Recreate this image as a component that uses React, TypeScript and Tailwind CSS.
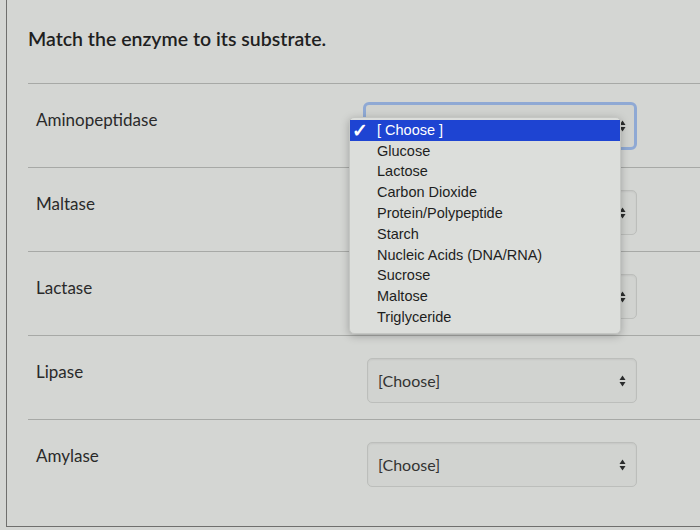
import React from "react";

const options = [
  "Glucose",
  "Lactose",
  "Carbon Dioxide",
  "Protein/Polypeptide",
  "Starch",
  "Nucleic Acids (DNA/RNA)",
  "Sucrose",
  "Maltose",
  "Triglyceride",
];

const rows = ["Aminopeptidase", "Maltase", "Lactase", "Lipase", "Amylase"];

function Arrows() {
  return (
    <svg width="7" height="12" viewBox="0 0 7 12" className="shrink-0">
      <path d="M3.5 0.5 L6.5 5 L0.5 5 Z" fill="#2a2c2c" />
      <path d="M3.5 11.5 L6.5 7 L0.5 7 Z" fill="#2a2c2c" />
    </svg>
  );
}

function SelectBox({ focused, hidden }: { focused?: boolean; hidden?: boolean }) {
  return (
    <div
      className={
        focused
          ? "w-[274px] h-[48px] rounded-[6px] border-[3px] border-[#8fa9d4] bg-[#d0d2cf] flex items-center justify-between pl-[9px] pr-[8px]"
          : "w-[270px] h-[45px] rounded-[5px] border border-[#bcbebb] bg-[#d1d3d0] shadow-[inset_0_1px_2px_rgba(0,0,0,0.06)] flex items-center justify-between pl-[10px] pr-[10px]"
      }
    >
      <span className="text-[16px] text-[#333] font-['Lato','Liberation_Sans',sans-serif]">
        {hidden ? "" : "[Choose]"}
      </span>
      <Arrows />
    </div>
  );
}

export default function App() {
  return (
    <div className="w-[700px] h-[530px] bg-[#d4d6d3] pl-[6px] pb-[3px] overflow-hidden relative font-['Lato','Liberation_Sans',sans-serif]">
      <div className="h-full border-l border-b border-[#6f6f6d] pl-[21px]">
        <div className="h-[83px] flex items-center">
          <h1 className="text-[19.5px] text-[#1f1f1f] font-semibold pb-[4px] -mt-[2px]">
            Match the enzyme to its substrate.
          </h1>
        </div>
        {rows.map((r, i) => (
          <div
            key={r}
            className="h-[84px] border-t border-[#a7a9a6] flex items-start"
          >
            <div className="w-[339px] pl-[8px] pt-[26px] text-[17px] text-[#2a2a2a] leading-[20px]">
              {r}
            </div>
            <div className={i === 0 ? "pt-[18px] -ml-[4px]" : "pt-[22px]"}>
              <SelectBox focused={i === 0} hidden={i < 3} />
            </div>
          </div>
        ))}
      </div>

      <div className="absolute left-[349px] top-[117px] w-[272px] rounded-[5px] bg-[#dcdedb] shadow-[0_2px_8px_rgba(0,0,0,0.25)] border border-[#c4c6c3] pt-[2px] pb-[5px] font-['Liberation_Sans',Arial,sans-serif] text-[14.5px] text-[#1e1e1e]">
        <div className="h-[21px] bg-[#1e44d2] text-white flex items-center">
          <span className="w-[27px] pl-[2px] text-[19px] leading-none font-bold">✓</span>
          <span>[ Choose ]</span>
        </div>
        {options.map((o) => (
          <div key={o} className="h-[20.8px] flex items-center pl-[27px]">
            {o}
          </div>
        ))}
      </div>
    </div>
  );
}
